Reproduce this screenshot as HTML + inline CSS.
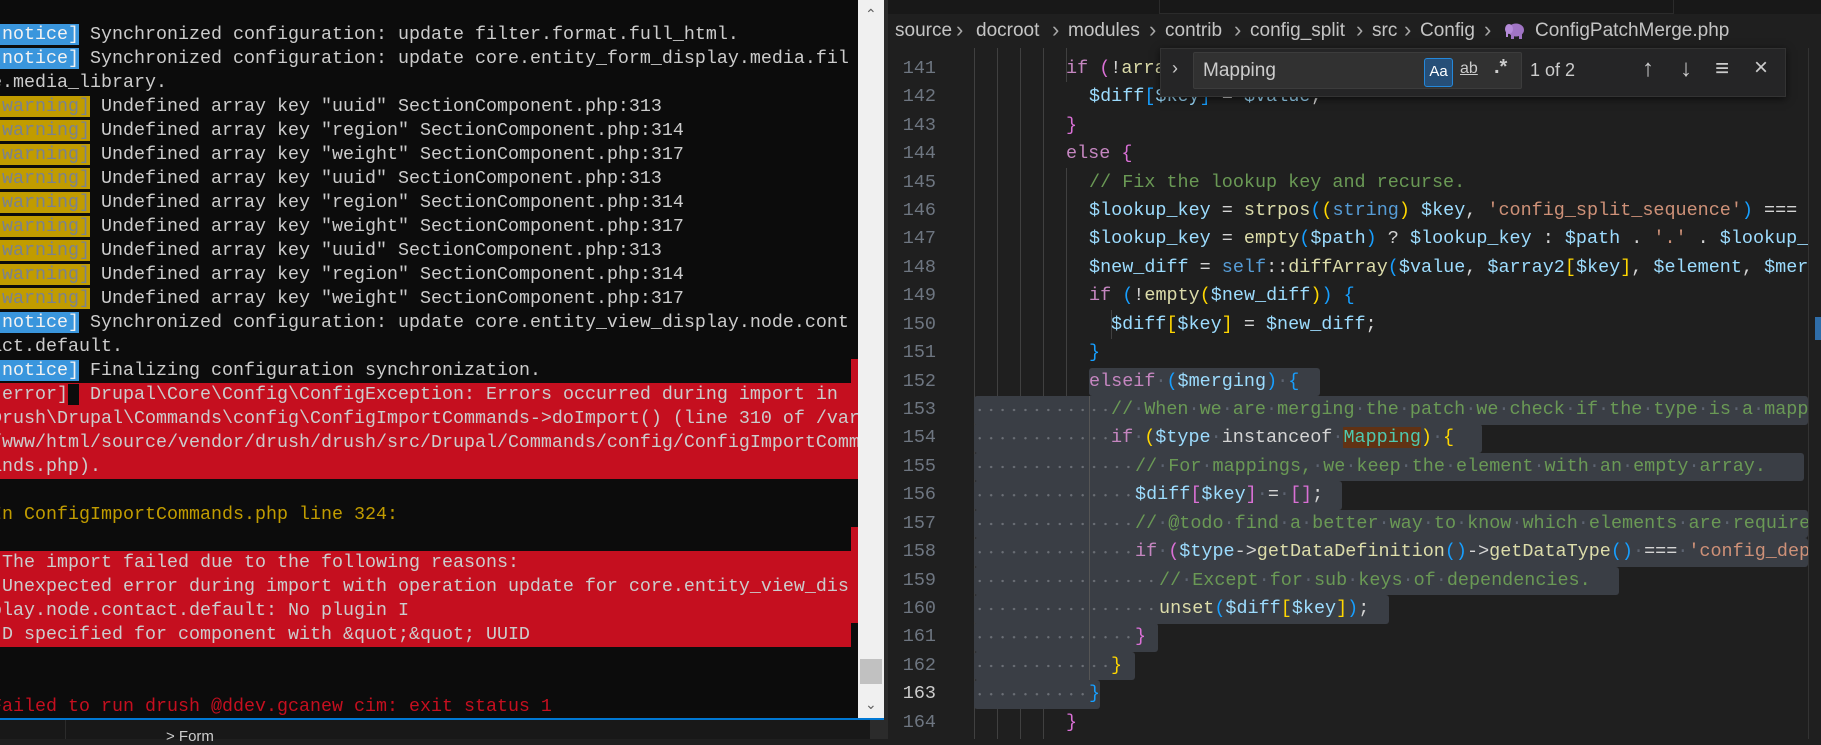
<!DOCTYPE html>
<html><head><meta charset="utf-8"><style>
*{margin:0;padding:0;box-sizing:border-box}
body{width:1821px;height:739px;overflow:hidden;background:#1f1f1f;position:relative;font-family:"Liberation Mono",monospace}
.term{position:absolute;left:0;top:0;width:858px;height:718px;background:#0c0c0c;overflow:hidden}
.tl{position:absolute;left:-9px;height:24px;line-height:24px;font-size:18.33px;color:#cccccc;white-space:pre}
.n{background:#3a96dd;color:#f2f2f2}
.w{background:#c19c00;color:#7a8290}
.redbg{position:absolute;background:#c50f1f}
.sb{position:absolute;left:858px;top:0;width:26px;height:718px;background:#f0f0f0}
.ed{position:absolute;height:28.43px;line-height:28.43px;font-size:18.45px;white-space:pre;color:#d4d4d4}
.ln{position:absolute;left:890px;width:46px;text-align:right;font-size:18.45px;height:28.43px;line-height:28.43px;color:#6e7681}
.k{color:#c586c0}.v{color:#9cdcfe}.f{color:#dcdcaa}.c{color:#6a9955}.s{color:#ce9178}.b{color:#569cd6}
.g{color:#ffd700}.o{color:#da70d6}.u{color:#179fff}.t{color:#4ec9b0}
.d{color:#5c6370}
.sel{position:absolute;background:#3a3e45;height:28.5px;border-radius:3px}
.dots{position:absolute;height:28.43px;background-image:radial-gradient(circle,#6b6f76 1px,transparent 1.4px);background-size:11.45px 28.43px;background-position:0 0}
.gd{position:absolute;width:1px;background:#404040}
.bc{position:absolute;top:14px;height:34px;line-height:34px;font-family:"Liberation Sans",sans-serif;font-size:19px;color:#c4c4c4;white-space:pre}
.sp{position:absolute;top:14px;height:34px;line-height:32px;font-family:"Liberation Sans",sans-serif;font-size:22px;color:#a8a8a8}
</style></head><body>

<div class="term">
<div class="redbg" style="left:0;top:383px;width:851px;height:96px"></div>
<div class="redbg" style="left:851px;top:359px;width:7px;height:120px"></div>
<div class="redbg" style="left:851px;top:527px;width:7px;height:96px"></div>
<div class="redbg" style="left:0;top:551px;width:851px;height:96px"></div>
<div class="tl" style="top:23px"><span class="n">[notice]</span> Synchronized configuration: update filter.format.full_html.</div>
<div class="tl" style="top:47px"><span class="n">[notice]</span> Synchronized configuration: update core.entity_form_display.media.fil</div>
<div class="tl" style="top:71px">e.media_library.</div>
<div class="tl" style="top:95px"><span class="w">[warning]</span> Undefined array key "uuid" SectionComponent.php:313</div>
<div class="tl" style="top:119px"><span class="w">[warning]</span> Undefined array key "region" SectionComponent.php:314</div>
<div class="tl" style="top:143px"><span class="w">[warning]</span> Undefined array key "weight" SectionComponent.php:317</div>
<div class="tl" style="top:167px"><span class="w">[warning]</span> Undefined array key "uuid" SectionComponent.php:313</div>
<div class="tl" style="top:191px"><span class="w">[warning]</span> Undefined array key "region" SectionComponent.php:314</div>
<div class="tl" style="top:215px"><span class="w">[warning]</span> Undefined array key "weight" SectionComponent.php:317</div>
<div class="tl" style="top:239px"><span class="w">[warning]</span> Undefined array key "uuid" SectionComponent.php:313</div>
<div class="tl" style="top:263px"><span class="w">[warning]</span> Undefined array key "region" SectionComponent.php:314</div>
<div class="tl" style="top:287px"><span class="w">[warning]</span> Undefined array key "weight" SectionComponent.php:317</div>
<div class="tl" style="top:311px"><span class="n">[notice]</span> Synchronized configuration: update core.entity_view_display.node.cont</div>
<div class="tl" style="top:335px">act.default.</div>
<div class="tl" style="top:359px"><span class="n">[notice]</span> Finalizing configuration synchronization.</div>
<div class="tl" style="top:383px">[error]<span style="background:#0c0c0c"> </span> Drupal\Core\Config\ConfigException: Errors occurred during import in</div>
<div class="tl" style="top:407px">Drush\Drupal\Commands\config\ConfigImportCommands-&gt;doImport() (line 310 of /var</div>
<div class="tl" style="top:431px">/www/html/source/vendor/drush/drush/src/Drupal/Commands/config/ConfigImportComm</div>
<div class="tl" style="top:455px">ands.php).</div>
<div class="tl" style="top:503px;color:#c19c00">In ConfigImportCommands.php line 324:</div>
<div class="tl" style="top:551px"> The import failed due to the following reasons:</div>
<div class="tl" style="top:575px"> Unexpected error during import with operation update for core.entity_view_dis</div>
<div class="tl" style="top:599px">play.node.contact.default: No plugin I</div>
<div class="tl" style="top:623px"> D specified for component with &amp;quot;&amp;quot; UUID</div>
<div class="tl" style="top:695px;color:#c50f1f">Failed to run drush @ddev.gcanew cim: exit status 1</div>
</div>
<div class="sb">
<div style="position:absolute;left:7px;top:6px;font-family:'Liberation Sans',sans-serif;font-size:14px;color:#606060">&#8963;</div>
<div style="position:absolute;left:2px;top:659px;width:22px;height:25px;background:#c1c1c1"></div>
<div style="position:absolute;left:7px;top:696px;font-family:'Liberation Sans',sans-serif;font-size:14px;color:#606060">&#8964;</div>
</div>
<div style="position:absolute;left:0;top:718px;width:884px;height:2px;background:#0078d4"></div>
<div style="position:absolute;left:0;top:720px;width:884px;height:19px;background:#181818"></div>
<div style="position:absolute;left:65px;top:720px;width:1px;height:19px;background:#2b2b2b"></div>
<div style="position:absolute;left:166px;top:728px;font-family:'Liberation Sans',sans-serif;font-size:15px;color:#ccc">&gt; Form</div>
<div style="position:absolute;left:870px;top:720px;width:14px;height:19px;background:#2b2b2b"></div>
<div style="position:absolute;left:884px;top:0;width:4px;height:739px;background:#2b2b2b"></div>

<!-- editor -->
<div class="gd" style="left:974px;top:48px;height:691px"></div>
<div class="gd" style="left:997px;top:48px;height:691px"></div>
<div class="gd" style="left:1020px;top:48px;height:691px"></div>
<div class="gd" style="left:1043px;top:48px;height:691px"></div>
<div class="gd" style="left:1066px;top:168px;height:524px"></div>
<div class="gd" style="left:1066px;top:48px;height:34px"></div>

<div class="sel" style="left:1089px;top:367.5px;width:231px"></div>
<div class="sel" style="left:974px;top:396px;width:834px"></div>
<div class="sel" style="left:974px;top:424.4px;width:508px"></div>
<div class="sel" style="left:974px;top:452.8px;width:830px"></div>
<div class="sel" style="left:974px;top:481.3px;width:368px"></div>
<div class="sel" style="left:974px;top:509.7px;width:834px"></div>
<div class="sel" style="left:974px;top:538.1px;width:834px"></div>
<div class="sel" style="left:974px;top:566.5px;width:645px"></div>
<div class="sel" style="left:974px;top:595px;width:415px"></div>
<div class="sel" style="left:974px;top:623.4px;width:184px"></div>
<div class="sel" style="left:974px;top:651.8px;width:161px"></div>
<div class="sel" style="left:974px;top:680.3px;width:126px"></div>
<div class="gd" style="left:1089px;top:396px;height:284px;background:#555"></div>
<div class="gd" style="left:1111px;top:310px;height:29px"></div>

<div class="dots" style="left:974px;top:396px;width:134px"></div>
<div class="dots" style="left:974px;top:424.4px;width:134px"></div>
<div class="dots" style="left:974px;top:452.8px;width:157px"></div>
<div class="dots" style="left:974px;top:481.3px;width:157px"></div>
<div class="dots" style="left:974px;top:509.7px;width:157px"></div>
<div class="dots" style="left:974px;top:538.1px;width:157px"></div>
<div class="dots" style="left:974px;top:566.5px;width:180px"></div>
<div class="dots" style="left:974px;top:595px;width:180px"></div>
<div class="dots" style="left:974px;top:623.4px;width:157px"></div>
<div class="dots" style="left:974px;top:651.8px;width:134px"></div>
<div class="dots" style="left:974px;top:680.3px;width:111px"></div>

<div class="ln" style="top:54.8px">141</div>
<div class="ln" style="top:83.2px">142</div>
<div class="ln" style="top:111.7px">143</div>
<div class="ln" style="top:140.1px">144</div>
<div class="ln" style="top:168.5px">145</div>
<div class="ln" style="top:197px">146</div>
<div class="ln" style="top:225.4px">147</div>
<div class="ln" style="top:253.8px">148</div>
<div class="ln" style="top:282.2px">149</div>
<div class="ln" style="top:310.7px">150</div>
<div class="ln" style="top:339.1px">151</div>
<div class="ln" style="top:367.5px">152</div>
<div class="ln" style="top:396px">153</div>
<div class="ln" style="top:424.4px">154</div>
<div class="ln" style="top:452.8px">155</div>
<div class="ln" style="top:481.3px">156</div>
<div class="ln" style="top:509.7px">157</div>
<div class="ln" style="top:538.1px">158</div>
<div class="ln" style="top:566.5px">159</div>
<div class="ln" style="top:595px">160</div>
<div class="ln" style="top:623.4px">161</div>
<div class="ln" style="top:651.8px">162</div>
<div class="ln" style="top:680.3px;color:#cccccc">163</div>
<div class="ln" style="top:708.7px">164</div>

<div style="position:absolute;left:0;top:0;width:1808px;height:739px;overflow:hidden">
<div class="ed" style="left:1066px;top:54.8px"><span class="k">if</span> <span class="o">(</span>!<span class="f">array_key_exists</span><span class="u">(</span><span class="v">$key</span>, <span class="v">$array2</span><span class="u">)</span> || !<span class="f">is_array</span><span class="u">(</span><span class="v">$array2</span><span class="g">[</span><span class="v">$key</span><span class="g">]</span><span class="u">)</span><span class="o">)</span></div>
<div class="ed" style="left:1089px;top:83.2px"><span class="v">$diff</span><span class="u">[</span><span class="v">$key</span><span class="u">]</span> = <span class="v">$value</span>;</div>
<div class="ed" style="left:1066px;top:111.7px"><span class="o">}</span></div>
<div class="ed" style="left:1066px;top:140.1px"><span class="k">else</span> <span class="o">{</span></div>
<div class="ed" style="left:1089px;top:168.5px"><span class="c">// Fix the lookup key and recurse.</span></div>
<div class="ed" style="left:1089px;top:197px"><span class="v">$lookup_key</span> = <span class="f">strpos</span><span class="u">(</span><span class="g">(</span><span class="b">string</span><span class="g">)</span> <span class="v">$key</span>, <span class="s">'config_split_sequence'</span><span class="u">)</span> === <span class="b">FALSE</span></div>
<div class="ed" style="left:1089px;top:225.4px"><span class="v">$lookup_key</span> = <span class="f">empty</span><span class="u">(</span><span class="v">$path</span><span class="u">)</span> ? <span class="v">$lookup_key</span> : <span class="v">$path</span> . <span class="s">'.'</span> . <span class="v">$lookup_key</span>;</div>
<div class="ed" style="left:1089px;top:253.8px"><span class="v">$new_diff</span> = <span class="b">self</span>::<span class="f">diffArray</span><span class="u">(</span><span class="v">$value</span>, <span class="v">$array2</span><span class="g">[</span><span class="v">$key</span><span class="g">]</span>, <span class="v">$element</span>, <span class="v">$merging</span><span class="u">)</span>;</div>
<div class="ed" style="left:1089px;top:282.2px"><span class="k">if</span> <span class="u">(</span>!<span class="f">empty</span><span class="g">(</span><span class="v">$new_diff</span><span class="g">)</span><span class="u">)</span> <span class="u">{</span></div>
<div class="ed" style="left:1111px;top:310.7px"><span class="v">$diff</span><span class="g">[</span><span class="v">$key</span><span class="g">]</span> = <span class="v">$new_diff</span>;</div>
<div class="ed" style="left:1089px;top:339.1px"><span class="u">}</span></div>
<div class="ed" style="left:1089px;top:367.5px"><span class="k">elseif</span><span class="d">·</span><span class="u">(</span><span class="v">$merging</span><span class="u">)</span><span class="d">·</span><span class="u">{</span></div>
<div class="ed" style="left:1111px;top:396px"><span class="c">//<span class="d">·</span>When<span class="d">·</span>we<span class="d">·</span>are<span class="d">·</span>merging<span class="d">·</span>the<span class="d">·</span>patch<span class="d">·</span>we<span class="d">·</span>check<span class="d">·</span>if<span class="d">·</span>the<span class="d">·</span>type<span class="d">·</span>is<span class="d">·</span>a<span class="d">·</span>mapping</span></div>
<div class="ed" style="left:1111px;top:424.4px"><span class="k">if</span><span class="d">·</span><span class="g">(</span><span class="v">$type</span><span class="d">·</span>instanceof<span class="d">·</span><span class="t" style="background:#613214">Mapping</span><span class="g">)</span><span class="d">·</span><span class="g">{</span></div>
<div class="ed" style="left:1135px;top:452.8px"><span class="c">//<span class="d">·</span>For<span class="d">·</span>mappings,<span class="d">·</span>we<span class="d">·</span>keep<span class="d">·</span>the<span class="d">·</span>element<span class="d">·</span>with<span class="d">·</span>an<span class="d">·</span>empty<span class="d">·</span>array.</span></div>
<div class="ed" style="left:1135px;top:481.3px"><span class="v">$diff</span><span class="o">[</span><span class="v">$key</span><span class="o">]</span><span class="d">·</span>=<span class="d">·</span><span class="o">[]</span>;</div>
<div class="ed" style="left:1135px;top:509.7px"><span class="c">//<span class="d">·</span>@todo<span class="d">·</span>find<span class="d">·</span>a<span class="d">·</span>better<span class="d">·</span>way<span class="d">·</span>to<span class="d">·</span>know<span class="d">·</span>which<span class="d">·</span>elements<span class="d">·</span>are<span class="d">·</span>required.</span></div>
<div class="ed" style="left:1135px;top:538.1px"><span class="k">if</span><span class="d">·</span><span class="o">(</span><span class="v">$type</span>-&gt;<span class="f">getDataDefinition</span><span class="u">()</span>-&gt;<span class="f">getDataType</span><span class="u">()</span><span class="d">·</span>===<span class="d">·</span><span class="s">'config_dependencies'</span></div>
<div class="ed" style="left:1159px;top:566.5px"><span class="c">//<span class="d">·</span>Except<span class="d">·</span>for<span class="d">·</span>sub<span class="d">·</span>keys<span class="d">·</span>of<span class="d">·</span>dependencies.</span></div>
<div class="ed" style="left:1159px;top:595px"><span class="f">unset</span><span class="u">(</span><span class="v">$diff</span><span class="g">[</span><span class="v">$key</span><span class="g">]</span><span class="u">)</span>;</div>
<div class="ed" style="left:1135px;top:623.4px"><span class="o">}</span></div>
<div class="ed" style="left:1111px;top:651.8px"><span class="g">}</span></div>
<div class="ed" style="left:1089px;top:680.3px"><span class="u">}</span></div>
<div class="ed" style="left:1066px;top:708.7px"><span class="o">}</span></div>
</div>

<!-- right ruler -->
<div style="position:absolute;left:1808px;top:48px;width:13px;height:691px;background:#1f1f1f;border-left:1px solid #333"></div>
<div style="position:absolute;left:1815px;top:317px;width:6px;height:23px;background:#2f6da8"></div>

<!-- tab bar + breadcrumb -->
<div style="position:absolute;left:888px;top:0;width:933px;height:14px;background:#181818"></div>
<div style="position:absolute;left:1159px;top:0;width:515px;height:14px;background:#181818;border-left:1px solid #2b2b2b;border-right:1px solid #2b2b2b;border-bottom:1px solid #2b2b2b"></div>
<div style="position:absolute;left:888px;top:14px;width:933px;height:34px;background:#1f1f1f"></div>
<div class="bc" style="left:895px">source</div><div class="sp" style="left:956px">›</div>
<div class="bc" style="left:976px">docroot</div><div class="sp" style="left:1052px">›</div>
<div class="bc" style="left:1068px">modules</div><div class="sp" style="left:1149px">›</div>
<div class="bc" style="left:1165px">contrib</div><div class="sp" style="left:1234px">›</div>
<div class="bc" style="left:1250px">config_split</div><div class="sp" style="left:1356px">›</div>
<div class="bc" style="left:1372px">src</div><div class="sp" style="left:1404px">›</div>
<div class="bc" style="left:1420px">Config</div><div class="sp" style="left:1484px">›</div>
<svg style="position:absolute;left:1504px;top:22px" width="22" height="18" viewBox="0 0 22 18"><ellipse cx="12" cy="8" rx="8" ry="6.5" fill="#a074c4"/><ellipse cx="5" cy="7" rx="4" ry="5" fill="#b48ad8"/><rect x="7" y="12" width="3" height="5" fill="#a074c4"/><rect x="15" y="12" width="3" height="5" fill="#a074c4"/><rect x="2" y="9" width="2" height="6" fill="#b48ad8"/></svg>
<div class="bc" style="left:1535px">ConfigPatchMerge.php</div>

<!-- find widget -->
<div style="position:absolute;left:1160px;top:48px;width:626px;height:49px;background:#252526;box-shadow:0 2px 8px rgba(0,0,0,.6);border:1px solid #333"></div>
<div style="position:absolute;left:1172px;top:58px;font-family:'Liberation Sans',sans-serif;font-size:18px;color:#ccc">›</div>
<div style="position:absolute;left:1193px;top:52px;width:329px;height:37px;background:#313131;border:1px solid #3c3c3c;border-radius:2px"></div>
<div style="position:absolute;left:1203px;top:60px;font-family:'Liberation Sans',sans-serif;font-size:19px;color:#cccccc">Mapping</div>
<div style="position:absolute;left:1424px;top:58px;width:29px;height:29px;background:#264f78;border:1px solid #2488db;border-radius:3px;font-family:'Liberation Sans',sans-serif;font-size:15px;color:#fff;text-align:center;line-height:26px">Aa</div>
<div style="position:absolute;left:1460px;top:60px;font-family:'Liberation Sans',sans-serif;font-size:16px;color:#ccc;text-decoration:underline">ab</div>
<div style="position:absolute;left:1494px;top:56px;font-family:'Liberation Sans',sans-serif;font-size:20px;color:#ccc;font-weight:bold">.*</div>
<div style="position:absolute;left:1530px;top:60px;font-family:'Liberation Sans',sans-serif;font-size:18px;color:#ccc">1 of 2</div>
<div style="position:absolute;left:1642px;top:55px;font-family:'Liberation Sans',sans-serif;font-size:24px;color:#ccc">↑</div>
<div style="position:absolute;left:1680px;top:55px;font-family:'Liberation Sans',sans-serif;font-size:24px;color:#ccc">↓</div>
<div style="position:absolute;left:1715px;top:55px;font-family:'Liberation Sans',sans-serif;font-size:24px;color:#ccc">≡</div>
<div style="position:absolute;left:1754px;top:54px;font-family:'Liberation Sans',sans-serif;font-size:24px;color:#ccc">×</div>
</body></html>
